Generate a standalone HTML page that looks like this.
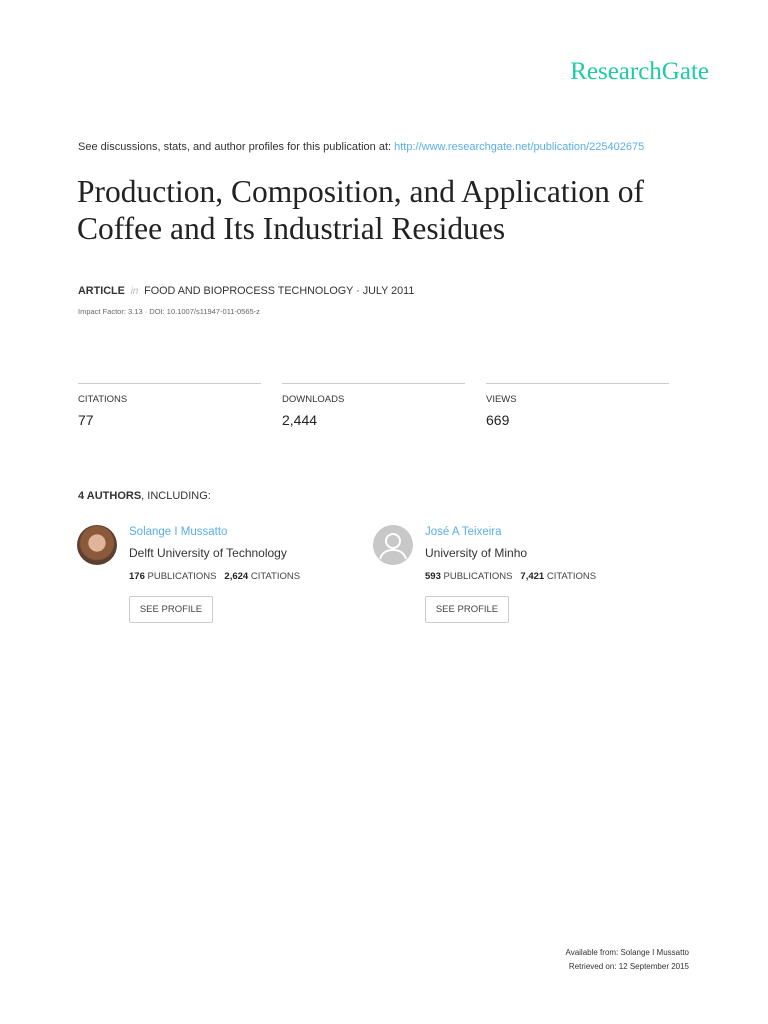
<!DOCTYPE html>
<html><head><meta charset="utf-8"><style>
body{margin:0;width:768px;height:1024px;background:#fff;position:relative;font-family:"Liberation Sans",sans-serif;color:#222;overflow:hidden}
.a{position:absolute;white-space:nowrap}
.line{position:absolute;top:383px;height:1px;background:#ccc;width:183px}
.lbl{font-size:9.5px;color:#333;top:394px}
.num{font-size:14px;color:#222;top:412px}
.btn{position:absolute;width:82px;height:25px;border:1px solid #ccc;border-radius:2px;font-size:9.5px;color:#444;text-align:center;line-height:25px;top:596px}
.blue{color:#5aaee8}
</style></head><body>
<div class="a" style="right:59px;top:58px;font-family:'Liberation Serif',serif;font-size:25px;color:#1ecba5">ResearchGate</div>
<div class="a" style="left:78px;top:141px;font-size:11px;color:#333">See discussions, stats, and author profiles for this publication at: <span class="blue">http://www.researchgate.net/publication/225402675</span></div>
<div class="a" style="left:77px;top:173px;font-family:'Liberation Serif',serif;font-size:31.5px;line-height:37px;color:#222">Production, Composition, and Application of<br>Coffee and Its Industrial Residues</div>
<div class="a" style="left:78px;top:285px;font-size:10.8px;color:#333"><b>ARTICLE</b> <i style="color:#bbb;font-size:10px">&nbsp;in&nbsp;</i> FOOD AND BIOPROCESS TECHNOLOGY · JULY 2011</div>
<div class="a" style="left:78px;top:307px;font-size:7.5px;color:#666">Impact Factor: 3.13 · DOI: 10.1007/s11947-011-0565-z</div>
<div class="line" style="left:78px"></div><div class="line" style="left:282px"></div><div class="line" style="left:486px"></div>
<div class="a lbl" style="left:78px">CITATIONS</div><div class="a lbl" style="left:282px">DOWNLOADS</div><div class="a lbl" style="left:486px">VIEWS</div>
<div class="a num" style="left:78px">77</div><div class="a num" style="left:282px">2,444</div><div class="a num" style="left:486px">669</div>
<div class="a" style="left:78px;top:490px;font-size:11px;color:#333"><b>4 AUTHORS</b>, INCLUDING:</div>
<div class="a" style="left:77px;top:525px;width:40px;height:40px;border-radius:50%;background:radial-gradient(circle at 50% 45%,#e0b49a 0 28%,#8a5a3a 30% 55%,#5a4030 60%)"></div>
<div class="a" style="left:373px;top:525px;width:40px;height:40px;border-radius:50%;background:#c8c8c8;overflow:hidden"><svg width="40" height="40"><circle cx="20" cy="16" r="7" fill="none" stroke="#fff" stroke-width="2"/><path d="M7 34c2-7 8-9 13-9s11 2 13 9" fill="none" stroke="#fff" stroke-width="2"/></svg></div>
<div class="a blue" style="left:129px;top:526px;font-size:11.5px">Solange I Mussatto</div>
<div class="a" style="left:129px;top:546px;font-size:12px;color:#333">Delft University of Technology</div>
<div class="a" style="left:129px;top:571px;font-size:9.5px;color:#444"><b style="color:#222">176</b> PUBLICATIONS &nbsp;&nbsp;<b style="color:#222">2,624</b> CITATIONS</div>
<div class="btn" style="left:129px">SEE PROFILE</div>
<div class="a blue" style="left:425px;top:526px;font-size:11.5px">José A Teixeira</div>
<div class="a" style="left:425px;top:546px;font-size:12px;color:#333">University of Minho</div>
<div class="a" style="left:425px;top:571px;font-size:9.5px;color:#444"><b style="color:#222">593</b> PUBLICATIONS &nbsp;&nbsp;<b style="color:#222">7,421</b> CITATIONS</div>
<div class="btn" style="left:425px">SEE PROFILE</div>
<div class="a" style="right:79px;top:946px;font-size:8px;color:#333;text-align:right;line-height:14px">Available from: Solange I Mussatto<br>Retrieved on: 12 September 2015</div>
</body></html>
